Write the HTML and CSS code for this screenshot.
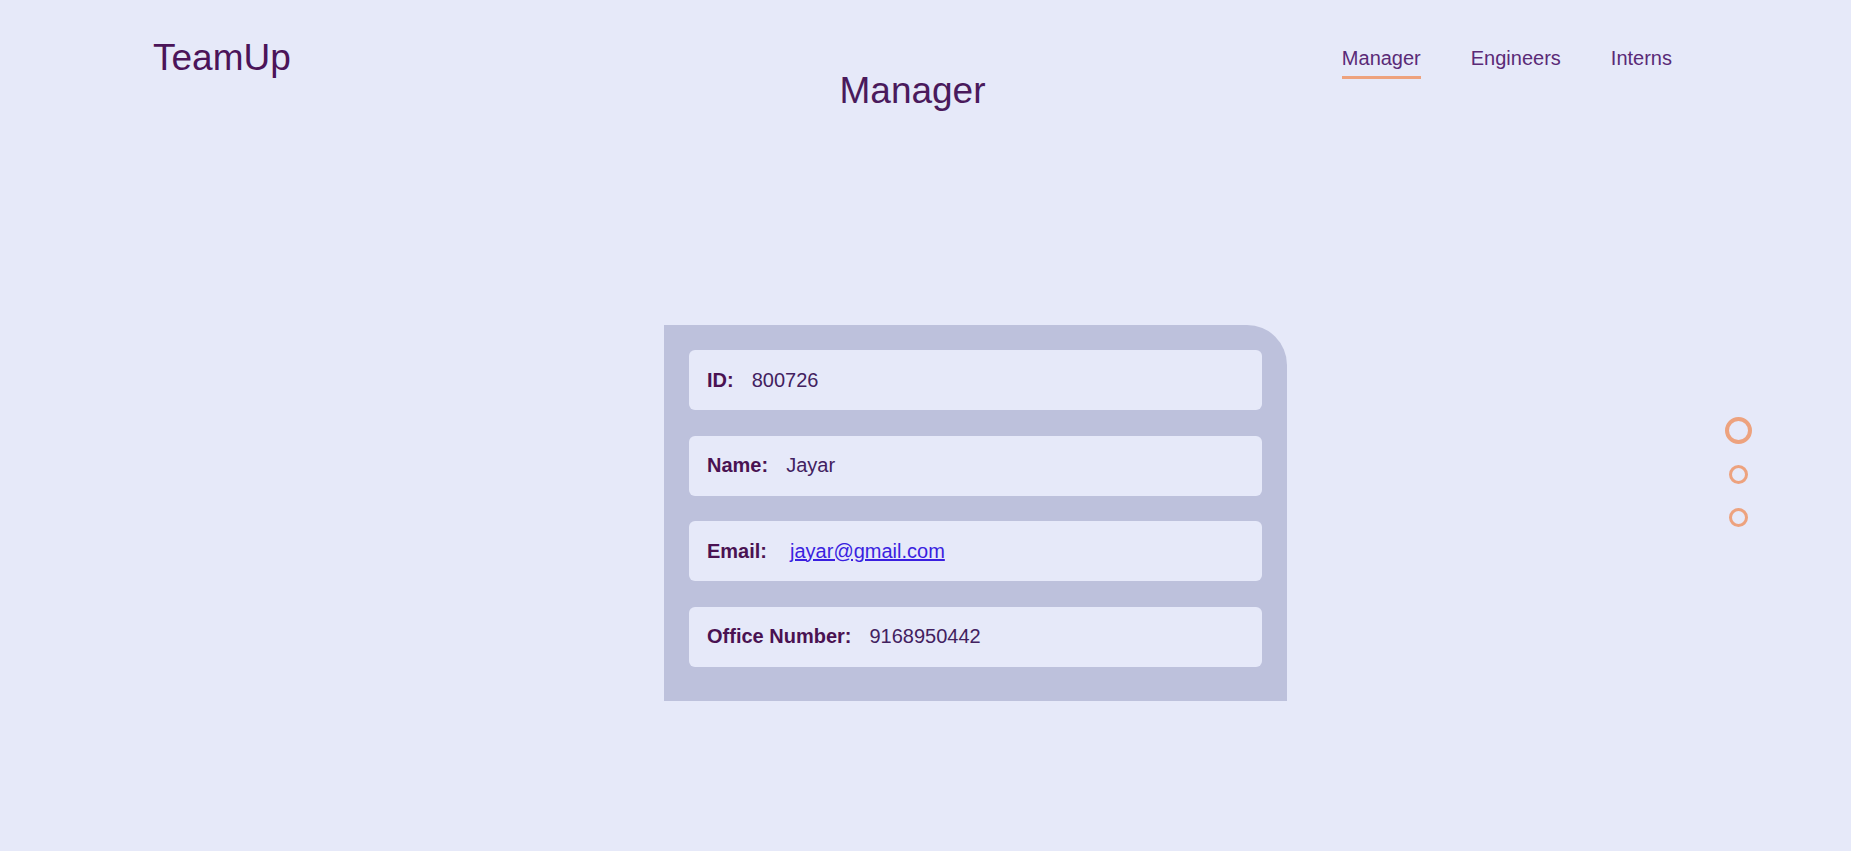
FILE: index.html
```html
<!DOCTYPE html>
<html lang="en">
<head>
<meta charset="utf-8">
<title>TeamUp</title>
<link rel="stylesheet" href="styles.css">
</head>
<body>
<header class="site-header">
  <div class="logo">TeamUp</div>
  <nav class="nav">
    <a class="nav-link is-active" href="#manager">Manager</a>
    <a class="nav-link" href="#engineers">Engineers</a>
    <a class="nav-link" href="#interns">Interns</a>
  </nav>
</header>

<main class="page">
  <section class="section" id="manager">
    <h1 class="section-title">Manager</h1>
    <div class="card-wrap">
      <div class="card">
        <div class="row"><span class="label">ID:</span><span class="value">800726</span></div>
        <div class="row"><span class="label">Name:</span><span class="value">Jayar</span></div>
        <div class="row"><span class="label">Email:</span><a class="value value-link" href="mailto:jayar@gmail.com">jayar@gmail.com</a></div>
        <div class="row"><span class="label">Office Number:</span><span class="value">9168950442</span></div>
      </div>
    </div>
  </section>
</main>

<div class="dots">
  <div class="dot-slot"><span class="dot dot-active"></span></div>
  <div class="dot-slot"><span class="dot"></span></div>
  <div class="dot-slot"><span class="dot"></span></div>
</div>
</body>
</html>
```

FILE: styles.css
```css
* {
  box-sizing: border-box;
}

html, body {
  margin: 0;
  padding: 0;
}

body {
  background: #e6e9f9;
  font-family: "Liberation Sans", Arial, sans-serif;
  color: #4a1757;
  min-height: 851px;
  overflow: hidden;
}

.site-header {
  position: absolute;
  top: 0;
  left: 0;
  right: 0;
  display: flex;
  justify-content: space-between;
  align-items: center;
  padding: 37px 179px 0 153px;
  z-index: 2;
}

.logo {
  font-size: 37px;
  line-height: normal;
  color: #4b1459;
}

.nav {
  display: flex;
  gap: 50px;
}

.nav-link {
  position: relative;
  font-size: 20px;
  line-height: 23px;
  color: #5a2a77;
  text-decoration: none;
}

.nav-link.is-active::after {
  content: "";
  position: absolute;
  left: 0;
  right: 0;
  bottom: -9px;
  height: 3px;
  background: #eea27e;
}

.section {
  padding-top: 70px;
}

.section-title {
  margin: 0;
  padding-right: 26px;
  text-align: center;
  font-size: 37px;
  font-weight: normal;
  line-height: normal;
  color: #4a1a5c;
}

.card-wrap {
  display: flex;
  justify-content: center;
  padding-left: 100px;
  margin-top: 213px;
}

.card {
  width: 623px;
  padding: 25px 25px 34px;
  background: #bdc1dc;
  border-top-right-radius: 40px;
  display: flex;
  flex-direction: column;
  gap: 25.5px;
}

.row {
  height: 60px;
  display: flex;
  align-items: center;
  padding-left: 18px;
  background: #e6e9f9;
  border-radius: 6px;
  font-size: 20px;
}

.label {
  font-weight: bold;
  color: #4a1252;
  margin-right: 18px;
}

.value {
  color: #42215f;
}

.value-link {
  margin-left: 5px;
  color: #3a1fe0;
  text-decoration: underline;
}

.dots {
  position: absolute;
  top: 409px;
  left: 1725px;
  width: 27px;
  display: flex;
  flex-direction: column;
}

.dot-slot {
  height: 43.5px;
  display: flex;
  align-items: center;
  justify-content: center;
}

.dot {
  display: block;
  width: 19px;
  height: 19px;
  border: 3px solid #eda27e;
  border-radius: 50%;
}

.dot-active {
  width: 27px;
  height: 27px;
  border-width: 4px;
}
```
